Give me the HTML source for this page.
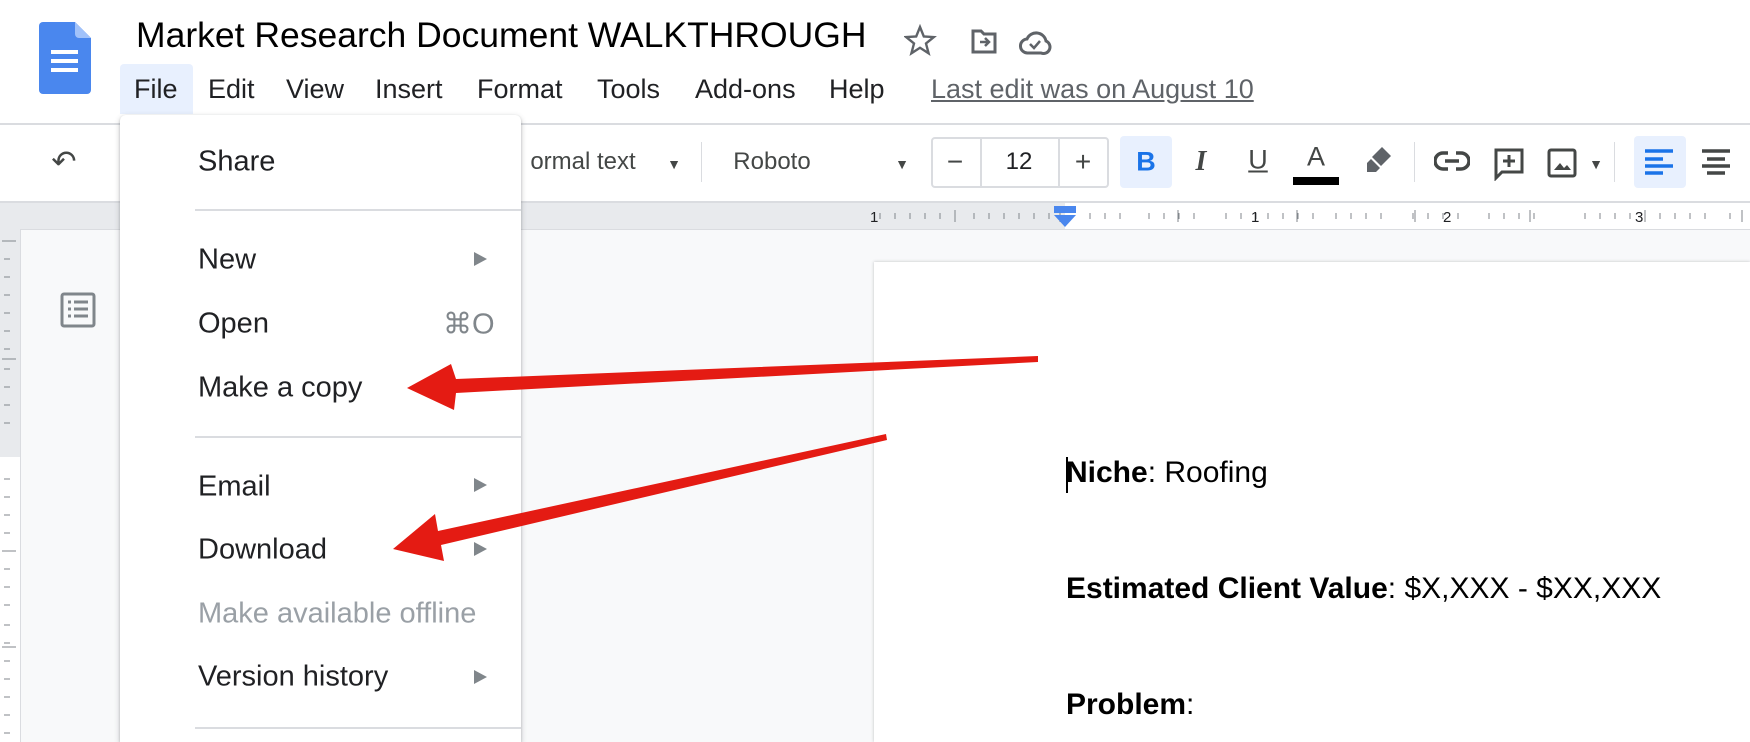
<!DOCTYPE html>
<html style="overflow:hidden;height:742px"><head><style>
html,body{margin:0;width:1750px;height:742px;overflow:hidden}
body{background:#f8f9fa;font-family:"Liberation Sans",Arial,sans-serif;position:relative}
.a{position:absolute}
.mi{position:absolute;font-size:27px;color:#202124;white-space:nowrap}
.it{position:absolute;left:198px;font-size:29px;color:#202124;white-space:nowrap;transform:translateY(-50%)}
.ar{position:absolute;left:474px;width:0;height:0;border-left:13px solid #80868b;border-top:7px solid transparent;border-bottom:7px solid transparent;transform:translateY(-50%)}
.sep{position:absolute;left:195px;width:326px;height:2px;background:#dadce0}
.tb{position:absolute;color:#444746;font-size:24px;transform:translate(-50%,-50%);white-space:nowrap}
.vs{position:absolute;width:1px;height:40px;top:142px;background:#dadce0}
</style></head><body>
<div class="a" style="left:0;top:0;width:1750px;height:123px;background:#fff;border-bottom:2px solid #dadce0"></div>
<div class="a" style="left:0;top:125px;width:1750px;height:76px;background:#fff;border-bottom:2px solid #dadce0"></div>
<div class="a" style="left:0;top:203px;width:1750px;height:26px;background:#fff;border-bottom:1px solid #dadce0"></div>
<div class="a" style="left:0;top:203px;width:1065px;height:26px;background:#e8eaed"></div>
<svg class="a" style="left:39px;top:22px" width="52" height="72" viewBox="0 0 52 72"><path d="M4 0H36L52 16V68a4 4 0 0 1-4 4H4a4 4 0 0 1-4-4V4a4 4 0 0 1 4-4z" fill="#4a87ee"/><path d="M36 0L52 16H40a4 4 0 0 1-4-4z" fill="#a1c2fa"/><rect x="12" y="28" width="27" height="4" fill="#fff"/><rect x="12" y="37" width="27" height="4" fill="#fff"/><rect x="12" y="46" width="27" height="4" fill="#fff"/></svg>
<div class="a" style="left:136px;top:15px;font-size:35.5px;color:#000">Market Research Document WALKTHROUGH</div>
<svg class="a" style="left:904px;top:24px" width="160" height="32" viewBox="0 0 160 32"><path d="M16 3l3.8 9.5 10 .6-7.8 6.4 2.6 9.8L16 23.8 7.4 29.3 10 19.5 2.2 13.1l10-.6z" fill="none" stroke="#5f6368" stroke-width="2.4"/><path d="M69 7h8l3 3h11v18H69z" fill="none" stroke="#5f6368" stroke-width="3"/><path d="M76 18h9M81 14l4 4-4 4" fill="none" stroke="#5f6368" stroke-width="2.5"/><path d="M137 29h-13a7 7 0 0 1-1-14 10 10 0 0 1 19 2 6 6 0 0 1-5 12z" fill="none" stroke="#5f6368" stroke-width="3"/><path d="M126 20l4 4 6-7" fill="none" stroke="#5f6368" stroke-width="2.5"/></svg>
<div class="a" style="left:120px;top:64px;width:73px;height:50px;background:#e8f0fe;border-radius:4px 4px 0 0"></div>
<div class="mi" style="left:134px;top:74px">File</div>
<div class="mi" style="left:208px;top:74px">Edit</div>
<div class="mi" style="left:286px;top:74px">View</div>
<div class="mi" style="left:375px;top:74px">Insert</div>
<div class="mi" style="left:477px;top:74px">Format</div>
<div class="mi" style="left:597px;top:74px">Tools</div>
<div class="mi" style="left:695px;top:74px">Add-ons</div>
<div class="mi" style="left:829px;top:74px">Help</div>
<div class="mi" style="left:931px;top:74px;color:#5f6368;text-decoration:underline">Last edit was on August 10</div>
<div class="tb" style="left:64px;top:162px;font-size:30px">↶</div>
<div class="tb" style="left:583px;top:162px">ormal text</div>
<div class="tb" style="left:674px;top:164px;font-size:14px">▼</div>
<div class="vs" style="left:701px"></div>
<div class="tb" style="left:772px;top:162px">Roboto</div>
<div class="tb" style="left:902px;top:164px;font-size:14px">▼</div>
<div class="a" style="left:931px;top:137px;width:174px;height:47px;border:2px solid #dadce0;border-radius:4px;background:#fff"></div>
<div class="a" style="left:980px;top:139px;width:2px;height:47px;background:#dadce0"></div>
<div class="a" style="left:1058px;top:139px;width:2px;height:47px;background:#dadce0"></div>
<div class="tb" style="left:955px;top:162px;font-size:28px">−</div>
<div class="tb" style="left:1019px;top:162px;color:#202124">12</div>
<div class="tb" style="left:1083px;top:162px;font-size:28px">+</div>
<div class="a" style="left:1120px;top:136px;width:52px;height:52px;background:#e8f0fe;border-radius:4px"></div>
<div class="tb" style="left:1146px;top:162px;color:#1a73e8;font-weight:bold;font-size:27px">B</div>
<div class="tb" style="left:1201px;top:162px;font-style:italic;font-size:28px;font-family:'Liberation Serif',serif;font-weight:bold">I</div>
<div class="tb" style="left:1258px;top:160px;font-size:27px;text-decoration:underline">U</div>
<div class="tb" style="left:1316px;top:157px;font-size:27px">A</div>
<div class="a" style="left:1293px;top:177px;width:46px;height:8px;background:#000"></div>
<svg class="a" style="left:1362px;top:145px" width="32" height="32" viewBox="0 0 32 32"><path d="M20 2l9 9-10 10-9-9z M9 14l9 9-4 4H5v-9z" fill="#5f6368"/></svg>
<div class="vs" style="left:1414px"></div>
<svg class="a" style="left:1434px;top:150px" width="36" height="22" viewBox="0 0 36 22"><path d="M14 3H9a8 8 0 0 0 0 16h5M22 3h5a8 8 0 0 1 0 16h-5M11 11h14" fill="none" stroke="#444746" stroke-width="3.5"/></svg>
<svg class="a" style="left:1493px;top:147px" width="32" height="34" viewBox="0 0 32 34"><path d="M3 3h26v22H9l-6 6z" fill="none" stroke="#444746" stroke-width="3"/><path d="M16 8v12M10 14h12" stroke="#444746" stroke-width="3"/></svg>
<svg class="a" style="left:1547px;top:148px" width="30" height="30" viewBox="0 0 30 30"><rect x="2" y="2" width="26" height="26" rx="2" fill="none" stroke="#444746" stroke-width="3"/><path d="M7 22l6-7 4 5 3-3 4 5z" fill="#444746"/></svg>
<div class="tb" style="left:1596px;top:164px;font-size:14px">▼</div>
<div class="vs" style="left:1614px"></div>
<div class="a" style="left:1634px;top:136px;width:52px;height:52px;background:#e8f0fe;border-radius:4px"></div>
<svg class="a" style="left:1645px;top:149px" width="30" height="26" viewBox="0 0 30 26"><path d="M0 2h28M0 10h18M0 17h28M0 24h18" stroke="#1a73e8" stroke-width="3.5"/></svg>
<svg class="a" style="left:1702px;top:149px" width="30" height="26" viewBox="0 0 30 26"><path d="M0 2h28M5 10h18M0 17h28M5 24h18" stroke="#444746" stroke-width="3.5"/></svg>
<svg class="a" style="left:0;top:203px" width="1750" height="26"><g stroke="#80868b" stroke-width="1">
<path d="M880 10v6M895 10v6M910 10v6M925 10v6M940 10v6M974 10v6M989 10v6M1004 10v6M1019 10v6M1034 10v6M1049 10v6M1090 10v6M1105 10v6M1120 10v6M1149 10v6M1164 10v6M1179 10v6M1194 10v6M1226 10v6M1241 10v6M1256 10v6M1268 10v6M1283 10v6M1298 10v6M1313 10v6M1336 10v6M1351 10v6M1366 10v6M1381 10v6M1413 10v6M1428 10v6M1443 10v6M1458 10v6M1489 10v6M1504 10v6M1519 10v6M1534 10v6M1585 10v6M1600 10v6M1615 10v6M1630 10v6M1660 10v6M1675 10v6M1690 10v6M1705 10v6M1730 10v6"/>
<path d="M955 7v12M1060 7v12M1178 7v12M1297 7v12M1415 7v12M1530 7v12M1645 7v12M1742 7v12"/></g>
<text x="870" y="19" font-size="15" fill="#202124" font-family="Liberation Sans">1</text>
<text x="1251" y="19" font-size="15" fill="#202124" font-family="Liberation Sans">1</text>
<text x="1443" y="19" font-size="15" fill="#202124" font-family="Liberation Sans">2</text>
<text x="1635" y="19" font-size="15" fill="#202124" font-family="Liberation Sans">3</text>
<rect x="1054" y="3" width="22" height="7" fill="#4a87ee"/><path d="M1054 12h22l-11 12z" fill="#4a87ee"/></svg>
<div class="a" style="left:0;top:229px;width:20px;height:513px;background:#fff;border-right:1px solid #dadce0"></div>
<div class="a" style="left:0;top:229px;width:20px;height:228px;background:#e8eaed"></div>
<svg class="a" style="left:0;top:229px" width="20" height="513"><g stroke="#80868b"><path d="M4 30h6M4 48h6M4 66h6M4 84h6M4 102h6M4 120h6M4 140h6M4 158h6M4 176h6M4 194h6M4 250h6M4 268h6M4 286h6M4 304h6M4 322h6M4 340h6M4 358h6M4 376h6M4 396h6M4 414h6M4 432h6M4 450h6M4 468h6M4 486h6M4 504h6M2 12h14M2 130h14M2 322h14M2 418h14"/></g></svg>
<svg class="a" style="left:60px;top:292px" width="36" height="36" viewBox="0 0 36 36"><rect x="2" y="2" width="32" height="32" rx="2" fill="none" stroke="#80868b" stroke-width="3"/><path d="M8 10h3M14 10h14M8 17h3M14 17h14M8 24h3M14 24h14" stroke="#80868b" stroke-width="3"/></svg>
<div class="a" style="left:874px;top:262px;width:876px;height:480px;background:#fff;box-shadow:0 0 3px rgba(60,64,67,.3)"></div>
<div class="a" style="left:1066px;top:457px;width:2px;height:36px;background:#000"></div>
<div class="a" style="left:1066px;top:456px;font-size:30px;color:#000"><b>Niche</b>: Roofing</div>
<div class="a" style="left:1066px;top:572px;font-size:30px;color:#000"><b>Estimated Client Value</b>: $X,XXX - $XX,XXX</div>
<div class="a" style="left:1066px;top:688px;font-size:30px;color:#000"><b>Problem</b>:</div>
<div class="a" style="left:120px;top:115px;width:401px;height:627px;background:#fff;border-radius:6px 6px 0 0;box-shadow:0 2px 6px rgba(60,64,67,.3),0 1px 2px rgba(60,64,67,.2)"></div>
<div class="it" style="top:162px">Share</div>
<div class="sep" style="top:209px"></div>
<div class="it" style="top:260px">New</div><div class="ar" style="top:259px"></div>
<div class="it" style="top:324px">Open</div><div class="it" style="top:324px;left:443px;color:#80868b">⌘O</div>
<div class="it" style="top:388px">Make a copy</div>
<div class="sep" style="top:436px"></div>
<div class="it" style="top:487px">Email</div><div class="ar" style="top:485px"></div>
<div class="it" style="top:550px">Download</div><div class="ar" style="top:549px"></div>
<div class="it" style="top:614px;color:#9aa0a6">Make available offline</div>
<div class="it" style="top:677px">Version history</div><div class="ar" style="top:677px"></div>
<div class="sep" style="top:727px"></div>
<svg class="a" style="left:0;top:0" width="1750" height="742"><g fill="#e41b13">
<polygon points="407,388 454,410 456,393 1038,362 1038,356 456,379 451,364"/>
<polygon points="393,549 444,561 441,545 887,440 886,434 438,531 435,514"/></g></svg>
</body></html>
